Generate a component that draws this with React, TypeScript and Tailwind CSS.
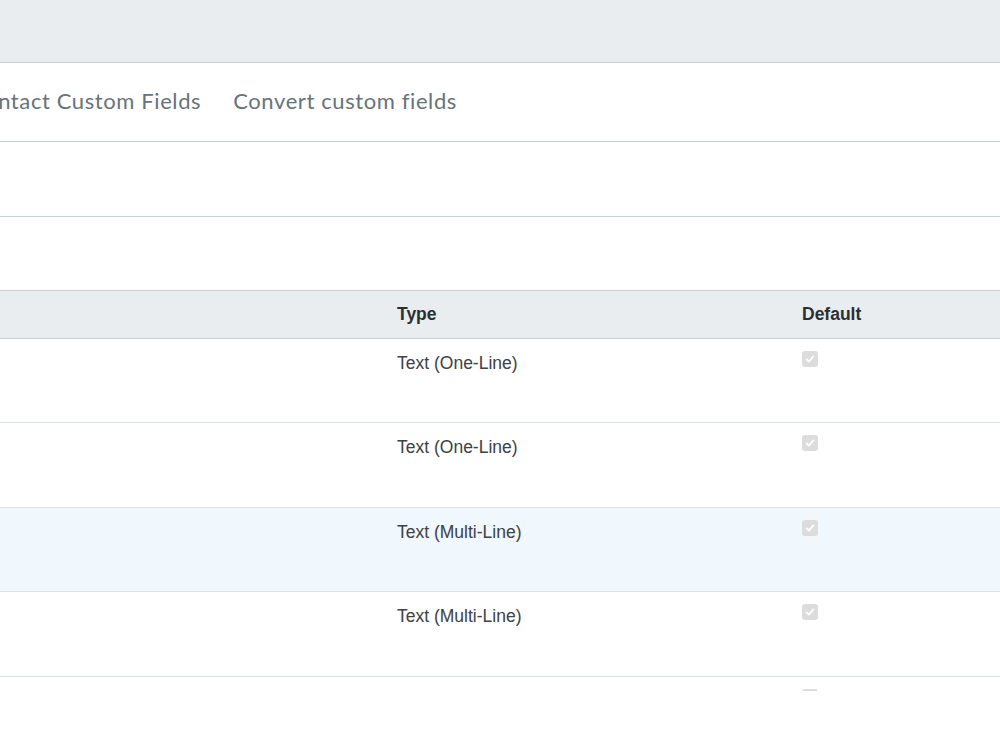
const rows = [
  { type: "Text (One-Line)", active: false, h: "h-[84px]" },
  { type: "Text (One-Line)", active: false, h: "h-[85px]" },
  { type: "Text (Multi-Line)", active: true, h: "h-[84px]" },
  { type: "Text (Multi-Line)", active: false, h: "h-[85px]" },
];

const Check = () => (
  <span className="flex h-4 w-4 items-center justify-center rounded-[3px] bg-[#dcdcdc]">
    <svg viewBox="0 0 16 16" className="h-3 w-3" fill="none">
      <path d="M3.5 8.5l3 3 6-7" stroke="#fff" strokeWidth="2.4" strokeLinecap="round" strokeLinejoin="round" />
    </svg>
  </span>
);

const App = () => {
  return (
    <div className="min-h-[750px] w-[1000px] overflow-hidden bg-white">
      <div className="h-[63px] border-b border-[#c9d0d4] bg-[#e9edf0]" />

      <div className="flex h-[79px] items-center gap-[32px] border-b border-[#c9d0d4] pb-[3px] font-['Lato',sans-serif] text-[22px] tracking-[0.6px] text-[#66737a]">
        <span className="ml-[-30px] whitespace-nowrap">Contact Custom Fields</span>
        <span className="whitespace-nowrap">Convert custom fields</span>
      </div>

      <div className="h-[75px] border-b border-[#c9d0d4]" />
      <div className="h-[73px]" />

      <div className="font-['Liberation_Sans',Arial,sans-serif] text-[17.5px] text-[#3d4245]">
        <div className="grid h-[49px] grid-cols-[397px_405px_1fr] items-center border-y border-[#c9d0d4] bg-[#e9edf0] font-bold text-[#2b2f31]">
          <div />
          <div>Type</div>
          <div>Default</div>
        </div>

        <div className="h-[352px] overflow-hidden">
          {rows.map((r, i) => (
            <div
              key={i}
              className={`grid ${r.h} grid-cols-[397px_405px_1fr] border-b border-[#dde2e4] pt-[12px] ${r.active ? "bg-[#f0f7fd]" : "bg-white"}`}
            >
              <div />
              <div className="leading-6">{r.type}</div>
              <div>
                <Check />
              </div>
            </div>
          ))}
          <div className="grid h-[85px] grid-cols-[397px_405px_1fr] pt-[12px]">
            <div />
            <div />
            <div>
              <Check />
            </div>
          </div>
        </div>
      </div>
    </div>
  );
};

export default App;
